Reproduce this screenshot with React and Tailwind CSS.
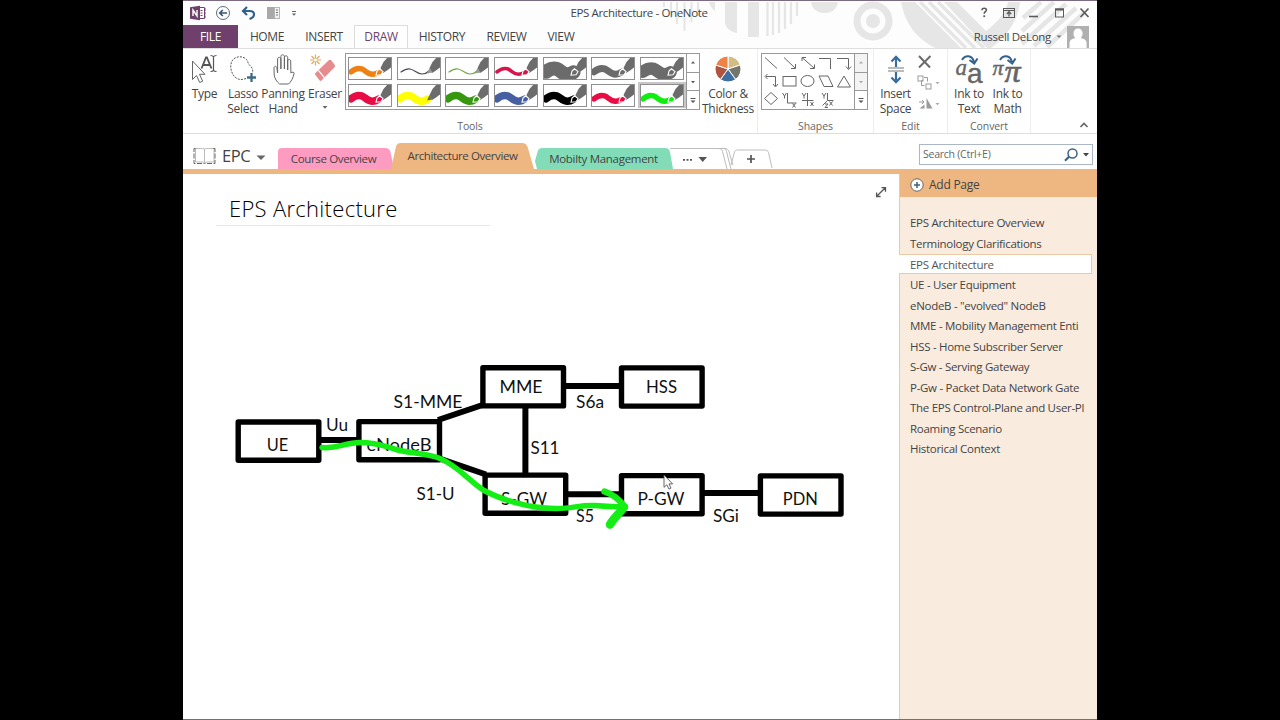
import React from 'react';

const QuickAccess = () => (
  <div className="flex items-center">
    <svg className="ml-[7px] h-4 w-4" viewBox="0 0 16 16">
      <path d="M9 2.500h5.500v11H9" fill="#fff" stroke="#70406c" strokeWidth="1" />
      <path d="M10.500 5.500h2M10.500 8h2M10.500 10.500h2M15 3v3M15 7v2.500M15 10.500v2.500" stroke="#70406c" strokeWidth="1" />
      <path d="M0 2.200L10 .8v14.400L0 13.800z" fill="#70406c" />
      <path d="M3 11V5l4 6V5" fill="none" stroke="#fff" strokeWidth="1.400" />
    </svg>
    <svg className="ml-[9px] h-4 w-4" viewBox="0 0 16 16" fill="none">
      <circle cx="8" cy="8" r="6.500" stroke="#5d6f7d" strokeWidth="1" />
      <path d="M12 8H5M7.800 5L4.800 8l3 3" stroke="#38566f" strokeWidth="1.700" />
    </svg>
    <svg className="ml-[10px] h-4 w-4" viewBox="0 0 16 16" fill="none">
      <path d="M2 6h6.500c3 0 4.500 1.300 4.500 3.300 0 2.200-1.700 3.800-4.500 4.700" stroke="#33618d" strokeWidth="2.200" />
      <path d="M6 2L2 6l4 4" stroke="#33618d" strokeWidth="2.200" />
    </svg>
    <svg className="ml-[9px] h-4 w-4" viewBox="0 0 16 16">
      <rect x="1" y="2" width="7.500" height="12" fill="#a9a9a9" />
      <rect x="8.500" y="2.400" width="5" height="11.200" fill="#f2f2f2" stroke="#a9a9a9" strokeWidth=".8" />
      <path d="M10 5h2M10 7.500h2M10 10h2" stroke="#777" />
    </svg>
    <svg className="ml-[8px] h-3 w-2" viewBox="0 0 8 12">
      <path d="M2 4.500h4" stroke="#666" />
      <path d="M1.800 6.500h4.400L4 8.800z" fill="#666" />
    </svg>
  </div>
);

const HeaderPattern = () => (
  <svg className="absolute inset-0 h-[47px] w-[914px]" viewBox="183 1 914 47" fill="none" stroke="#e6e6e6">
    <g fill="#e6e6e6" stroke="none">
      <path d="M725 2h12v31c-6-1-10-4-12-9z" />
      <path d="M748 2h11v35h-11z" />
      <path d="M811 2h27c-1 7-6 11-13.500 11S812 9 811 2z" />
      <circle cx="873" cy="21" r="7" />
      <path d="M709 2h6v9c-3-2-5-5-6-9z" />
      <path d="M901 2h14l46 46h-26c-18-9-30-24-34-46z" />
      <path d="M944 2h13l29 29c10-8 20-18 22-29h12c-2 20-15 36-29 46h-4z" />
    </g>
    <path d="M767.500 2v34M773 2v33M779 2v31M785 2v27M791 2v22M797 2v14" strokeWidth="2.300" />
    <path d="M664 2v5M671 2v16M677 2v22M684.500 2v29M691.500 2v20M698 2v14" strokeWidth="2" />
    <circle cx="873" cy="21" r="16" strokeWidth="7" />
    <path d="M920 2l46 46M929 2l46 46M938 2l46 46" strokeWidth="3.500" />
    <path d="M1041 2l-18 16M1054 2l-32 29M1066 4l-44 40M1076 8l-42 38M1085 12l-38 35" strokeWidth="4.500" />
  </svg>
);

const WindowControls = () => (
  <svg className="relative h-[14px] w-[114px]" viewBox="0 0 114 14" fill="none" stroke="#5b5b5b">
    <path d="M3 4.200c0-1.300 1-2 2.200-2s2.200.7 2.200 1.900c0 1.600-2.200 1.700-2.200 3.700" strokeWidth="1.600" />
    <path d="M5.200 9.300v1.800" strokeWidth="1.800" />
    <rect x="24.500" y="2.500" width="11" height="9" />
    <path d="M25 4.500h10" />
    <path d="M30 10.500V6M27.800 8L30 5.700 32.200 8" strokeWidth="1.300" />
    <path d="M50 10.500h9" strokeWidth="1.600" />
    <rect x="76.500" y="3" width="8" height="8" />
    <path d="M76 3.500h9" strokeWidth="2" />
    <path d="M101.500 2.500l8 8.500M109.500 2.500l-8 8.500" strokeWidth="1.700" />
  </svg>
);

const menu = [
  ['HOME', 'w-[58px]'],
  ['INSERT', 'w-[56px] mr-[2px]'],
  ['DRAW', 'w-[54px]'],
  ['HISTORY', 'w-[68px]'],
  ['REVIEW', 'w-[61px]'],
  ['VIEW', 'w-[48px]'],
];

const MenuBar = () => (
  <div className="relative flex h-[23px] items-end text-[12px] tracking-[-0.35px] text-[#444]">
    <div className="flex h-[23px] w-[55px] items-center justify-center bg-[#70406c] pt-px text-white">FILE</div>
    {menu.map(([label, width]) => (
      <div
        key={label}
        className={
          width +
          ' flex h-[23px] items-center justify-center ' +
          (label === 'DRAW' ? 'border-x border-t border-[#dcdcdc] bg-white text-[#70406c]' : 'pt-px')
        }
      >
        {label}
      </div>
    ))}
    <div className="ml-auto flex h-[23px] items-center text-[11.500px]">
      <span className="tracking-[-0.3px]">Russell DeLong</span>
      <svg className="ml-1 h-2 w-2" viewBox="0 0 8 8"><path d="M1.500 2.500h5L4 5z" fill="#777" /></svg>
      <svg className="mr-[8px] ml-[4px] h-[22px] w-[22px]" viewBox="0 0 22 22">
        <rect width="22" height="22" fill="#b0b0b0" />
        <path d="M11 2.500c3 0 4.600 2 4.600 5 0 2-1 3.600-2 4.600 4 .9 6 2.400 6 5V22H2.500v-4.900c0-2.600 2-4.100 6-5-1.200-1-2-2.600-2-4.600 0-3 1.500-5 4.500-5z" fill="#fff" />
      </svg>
    </div>
  </div>
);

const Tool = ({ icon, lines, width, caret }) => (
  <div className={width + ' flex flex-col items-center pt-[3px] text-[12px] leading-[15px] tracking-[-0.3px] text-[#444]'}>
    <div className="flex h-[34px] items-center justify-center">{icon}</div>
    {lines.map((l) => (
      <span key={l} className="whitespace-nowrap">{l}</span>
    ))}
    {caret && (
      <svg className="mt-[3px] h-2 w-2" viewBox="0 0 8 8"><path d="M1.500 2h5L4 4.800z" fill="#666" /></svg>
    )}
  </div>
);

const TypeIcon = () => (
  <svg className="h-8 w-8" viewBox="0 0 32 32" fill="none">
    <path d="M3.500 8v18.500l4-4 3.200 7 3-1.300-3.200-6.900h5.500z" fill="#fff" stroke="#666" />
    <path d="M12.500 15.500l4.500-11h.9l4.600 11M14.200 12h6.600" stroke="#555" strokeWidth="1.800" />
    <path d="M21.500 2.500c1.500 0 2.500.3 3 1.200.5-.9 1.500-1.200 3-1.200M24.500 3.500v14M21.500 18.500c1.500 0 2.500-.3 3-1.200.5.9 1.500 1.200 3 1.200" stroke="#555" strokeWidth="1.200" />
  </svg>
);

const LassoIcon = () => (
  <svg className="h-8 w-8" viewBox="0 0 32 32" fill="none">
    <path d="M19 25.500c-5 2-9 1-12-2.500-3-4-4.500-10-2-15 2.500-4.500 9-5.500 13.500-2.500 2.500 2 2 4.500 4 6.500 2 2 4 4 3 8" stroke="#555" strokeDasharray="2 1.200" />
    <path d="M24.500 20v9M20 24.500h9" stroke="#3d6c86" strokeWidth="2.300" />
  </svg>
);

const HandIcon = () => (
  <svg className="h-8 w-8" viewBox="0 0 32 32" fill="none" stroke="#666" strokeWidth="1">
    <path
      d="M12.500 31c-2.500-2-4.800-5.500-5.300-9L7 15c0-2 2.500-2.200 2.800-.3l.8 5.300V6c0-2.200 3.300-2.200 3.300 0v10V3.500c0-2.300 3.500-2.300 3.500 0V16 4.500c0-2.200 3.300-2.200 3.300 0V17 8c0-2 3-2 3 0l.2 12c1-1.200 3.500-1.200 3.200.6-.8 4-3.100 8.400-5.600 10.400z"
      fill="#fff"
    />
  </svg>
);

const EraserIcon = () => (
  <svg className="h-8 w-8" viewBox="1 0 32 32" fill="none">
    <path d="M7.500 1.500v4M7.500 8.500v4M2 7h4M9 7h4M3.500 3l3 3M8.500 8l3 3M11.500 3l-3 3M6.500 8l-3 3" stroke="#e0a95e" strokeWidth="1.200" />
    <path d="M7.500 20L20.500 7.500c1-.9 2-.8 2.800.1l3.300 4.200c.7.900.6 1.900-.3 2.700L13.500 27.500c-.7.600-1.500.5-2.100-.2l-4.100-5.500c-.5-.6-.5-1.200.2-1.800z" fill="#e58c8f" />
    <path d="M10.500 17.300l6 7.500" stroke="#fff" strokeWidth="1.200" />
  </svg>
);

const pens = [
  ['#ef8014', 5.5, 0, true],
  ['#4a4458', 1.2, 1, false],
  ['#6bab40', 1.2, 1, false],
  ['#d51648', 3.6, 0, true],
  ['#6b6b6b', 14, 0, true],
  ['#6b6b6b', 7, 0, true],
  ['#6b6b6b', 12.5, 0, true],
  ['#e80b44', 7.5, 0, true],
  ['#ffff00', 7.5, 0, false],
  ['#37980f', 7.5, 0, true],
  ['#465fa3', 7.5, 0, true],
  ['#000000', 7.5, 0, true],
  ['#e80b44', 5.5, 0, true],
  ['#10ee10', 5.5, 0, true],
];

const Pen = ({ color, w, thin, nib, active }) => (
  <div className={'flex h-[26px] w-[48px] items-center justify-center ' + (active ? 'bg-[#c9c5c9]' : '')}>
    <svg className="h-[23px] w-[44px] border border-[#8f8f8f] bg-white" viewBox="1 1 42 21" fill="none">
      <path
        d={thin ? 'M4 15c3-2 6-3.500 9-3 5 1 7 5 12 5 3 0 5-1 7-3' : 'M3 14.800c3-2.500 7-4 10.500-3 4 1.500 6 5.500 11 5.500 2 0 4-.8 6-2'}
        stroke={color}
        strokeWidth={w}
        strokeLinecap="round"
      />
      <path d="M32.500 11l3-6L40 0h5v9l-6 4.500-4 2.500z" fill="#6c6c6c" />
      {nib ? (
        <path d="M29 14l2.500-2.200 3.500 2.900-2 3.100-5 .4z" fill={color} stroke="#fff" strokeWidth="1.100" />
      ) : (
        <path d="M32.500 11l-2.500 5.500 5.500-1z" fill={w > 3 ? '#6c6c6c' : '#999'} />
      )}
    </svg>
  </div>
);

const ScrollColumn = ({ muted }) => (
  <div className="flex w-[13px] flex-col divide-y divide-[#999] border-l border-[#999] bg-white">
    {['M4 5.500h4L6 3.300z', 'M4 4h4L6 6.200z', 'M3.500 5.500h5L6 8z'].map((d, i) => (
      <div key={d} className={'flex flex-1 items-center justify-center ' + (muted && i < 2 ? 'bg-[#f3f3f3]' : '')}>
        <svg className="h-[10px] w-3" viewBox="0 0 12 10">
          <path d={d} fill={muted && i < 2 ? '#aaa' : '#555'} />
          {i === 2 && <path d="M3.500 3.500h5" stroke="#555" />}
        </svg>
      </div>
    ))}
  </div>
);

const WheelIcon = () => (
  <svg className="h-7 w-7" viewBox="-14 -14 28 28" stroke="#fff" strokeWidth="1">
    <path d="M0 0V-13A13 13 0 0 1 12.360 -4.020Z" fill="#d3bd83" />
    <path d="M0 0L12.360 -4.020A13 13 0 0 1 7.640 10.520Z" fill="#74756b" />
    <path d="M0 0L7.640 10.520A13 13 0 0 1 -7.640 10.520Z" fill="#3f6fa3" />
    <path d="M0 0L-7.640 10.520A13 13 0 0 1 -12.360 -4.020Z" fill="#b0543f" />
    <path d="M0 0L-12.360 -4.020A13 13 0 0 1 0 -13Z" fill="#ef8248" />
  </svg>
);

const ShapesGallery = () => (
  <div className="mt-[4px] flex h-[57px] w-[107px] border border-[#999] bg-white">
    <svg className="h-[55px] w-[92px]" viewBox="762 54 92 55" fill="none" stroke="#666" strokeWidth="1">
      <path d="M765 57.500l12 11" />
      <path d="M784 57.500l11 10.500M795.500 64v4.500h-4.500" />
      <path d="M802 57.500l12 10.500M802 61v-3.500h4M814.500 64.500v4h-4.500" />
      <path d="M819 58.500h11.500V69" />
      <path d="M837 58.500h11.500v10M846 66.500l2.500 3 2.500-3" />
      <path d="M766 76.500h9.500V86M767.500 74l-2.500 2.500 2.500 2.500M773 84l2.500 3 2.500-3" />
      <rect x="783" y="76.500" width="13" height="9.500" />
      <ellipse cx="807.500" cy="81" rx="6.500" ry="5.500" />
      <path d="M819 76h9l5 10.500h-9z" />
      <path d="M844 76l6.500 11h-13z" />
      <path d="M771 92.500l6.500 6-6.500 6-6.500-6z" />
      <path d="M782.500 93l2 3 2-3M784.500 96v2.500M787.500 93v10h9M792.500 103.500l3 4M795.500 103.500l-3 4" />
      <path d="M802 93l2 3 2-3M804 96v2.500M807.500 93v13M802 100.500h11.500M810.500 102l3 4M813.500 102l-3 4" />
      <path d="M822 93l2 3 2-3M824 96v2.500M827.500 93v7.500h6M827.500 100.500l-5 5M829.500 101.500l3 4M832.500 101.500l-3 4M825 104h3l-3 3.500h3" />
    </svg>
    <ScrollColumn muted />
  </div>
);

const InsertSpaceIcon = () => (
  <svg className="h-8 w-8" viewBox="0 0 32 32" fill="none">
    <path d="M8 15h16M8 18h16" stroke="#777" />
    <path d="M16 14V4.500M11.500 8.500L16 3.800l4.500 4.700M16 19v9.500M11.500 24.500L16 29.200l4.500-4.700" stroke="#3a6c9c" strokeWidth="2.200" />
  </svg>
);

const EditIcons = () => (
  <svg className="mt-[4px] h-[60px] w-6" viewBox="917 53 24 60" fill="none">
    <path d="M919 56l11 11.500M930.500 56L919 67.500" stroke="#6b6b6b" strokeWidth="2" />
    <g stroke="#9b9b9b">
      <rect x="918" y="76" width="5" height="5" />
      <rect x="926" y="84" width="5" height="5" />
      <path d="M924 77.500h3.500v4M923 80.500h-1.500v5h3" />
      <path d="M919 102h5M922 100l2 2-2 2" />
    </g>
    <path d="M926.500 98v10.500h6zM924.500 108.500h-5l5-4z" fill="#9b9b9b" />
    <path d="M935.500 82h4l-2 2.200zM935.500 103h4l-2 2.200z" fill="#aaa" />
  </svg>
);

const ConvertIcon = ({ children }) => (
  <svg className="h-8 w-[33px] overflow-visible" viewBox="0 0 33 32">
    <g fill="#666">{children}</g>
    <path d="M9 7C12 2 19 1.500 21 9M16.500 7l4.700 3.500L24.500 5.500" fill="none" stroke="#33618d" strokeWidth="2" />
  </svg>
);

const InkToTextIcon = () => (
  <ConvertIcon>
    <text x="2.500" y="22" fontFamily="Liberation Serif, serif" fontStyle="italic" fontSize="23" stroke="#666" strokeWidth=".4">a</text>
    <text x="14" y="30" fontFamily="Liberation Sans, sans-serif" fontSize="28" stroke="#666" strokeWidth=".4">a</text>
  </ConvertIcon>
);

const InkToMathIcon = () => (
  <ConvertIcon>
    <text x="1.500" y="21.500" fontFamily="Liberation Serif, serif" fontStyle="italic" fontSize="22" stroke="#666" strokeWidth=".5">π</text>
    <text x="13.500" y="29" fontFamily="Liberation Serif, serif" fontStyle="italic" fontSize="32" stroke="#666" strokeWidth=".7">π</text>
  </ConvertIcon>
);

const Group = ({ label, width, children }) => (
  <div className={width + ' flex flex-col justify-between border-r border-[#ededed]'}>
    <div className="flex">{children}</div>
    <div className="text-center text-[10.500px] leading-[14px] tracking-[-0.1px] text-[#666]">{label}</div>
  </div>
);

const Ribbon = () => (
  <div className="relative flex h-[86px] border-y border-[#dedede] bg-white">
    <Group label="Tools" width="w-[575px]">
      <Tool width="w-[43px]" icon={<TypeIcon />} lines={['Type']} />
      <Tool width="w-[34px]" icon={<LassoIcon />} lines={['Lasso', 'Select']} />
      <Tool width="w-[46px]" icon={<HandIcon />} lines={['Panning', 'Hand']} />
      <Tool width="w-[38px]" icon={<EraserIcon />} lines={['Eraser']} caret />
      <div className="mt-[4px] ml-[1px] flex h-[57px] w-[355px] border border-[#999]">
        <div className="grid w-[341px] grid-cols-7 content-center justify-items-center gap-y-[1px]">
          {pens.map(([color, w, thin, nib], i) => (
            <Pen key={i} color={color} w={w} thin={thin} nib={nib} active={i === 13} />
          ))}
        </div>
        <ScrollColumn />
      </div>
      <Tool width="w-[56px]" icon={<WheelIcon />} lines={['Color &', 'Thickness']} />
    </Group>
    <Group label="Shapes" width="w-[116px]">
      <div className="pl-[3px]"><ShapesGallery /></div>
    </Group>
    <Group label="Edit" width="w-[74px]">
      <Tool width="w-[43px]" icon={<InsertSpaceIcon />} lines={['Insert', 'Space']} />
      <EditIcons />
    </Group>
    <Group label="Convert" width="w-[83px]">
      <Tool width="w-[42px]" icon={<InkToTextIcon />} lines={['Ink to', 'Text']} />
      <Tool width="w-[35px]" icon={<InkToMathIcon />} lines={['Ink to', 'Math']} />
    </Group>
    <div className="flex flex-1 items-end justify-end">
      <svg className="mr-[8px] mb-[4px] h-2 w-[10px]" viewBox="0 0 10 8" fill="none">
        <path d="M1.500 6L5 2.500 8.500 6" stroke="#666" strokeWidth="1.700" />
      </svg>
    </div>
  </div>
);

const SectionTabs = () => (
  <div className="flex h-[35px] items-end bg-white text-[11.500px] tracking-[-0.35px] text-[#444]">
    <div className="flex h-[35px] w-[95px] items-center pt-[9px]">
      <svg className="ml-[10px] h-5 w-[24px]" viewBox="0 0 24 20" fill="none" stroke="#666">
        <path d="M11.500 3c-1-.4-2.500-.5-4-.5H2.500v13.500h5.500c1.500 0 2.500.2 3.500.5 1-.3 2-.5 3.500-.5h6V2.500h-5.500c-1.500 0-3 .1-4 .5z" stroke="#aaa" strokeWidth=".8" />
        <path d="M11.500 3v13.500" stroke="#bbb" />
        <path d="M2.500 2.500H1V17.500h10.500M20.500 2.500H22V17.500H11.500" strokeDasharray="5 1.500" />
      </svg>
      <span className="ml-[5px] text-[16.500px] tracking-[-0.4px]">EPC</span>
      <svg className="ml-[6px] h-3 w-[10px]" viewBox="0 0 10 12"><path d="M.5 5.500h9L5 10z" fill="#666" /></svg>
    </div>
    <div className="relative flex h-[21px] w-[116px] items-center justify-center pr-[5px]">
      <svg className="absolute inset-0 h-[21px] w-[116px]" viewBox="0 0 116 21"><path d="M0 21V3.500C0 1 1.500 0 4 0h103c3 0 5 1.500 5.500 4L116 21z" fill="#fd9cc0" /></svg>
      <span className="relative whitespace-nowrap">Course Overview</span>
    </div>
    <div className="relative -ml-1 flex h-[26px] w-[144px] items-center justify-center pl-px">
      <svg className="absolute inset-0 h-[26px] w-[144px]" viewBox="0 0 145 27" preserveAspectRatio="none"><path d="M1 27L6 4C6.500 1.500 8 0 11 0h122c3 0 4.500 1.500 5.500 4L145 27z" fill="#eeb781" /></svg>
      <span className="relative tracking-[-0.42px] whitespace-nowrap">Architecture Overview</span>
    </div>
    <div className="relative flex h-[21px] w-[139px] items-center justify-center">
      <svg className="absolute inset-0 h-[21px] w-[139px]" viewBox="0 0 139 21"><path d="M3 21L1 13l2.500-9C4 1.500 5.500 0 8.500 0H131c3 0 4.500 1.500 5 4l3 17z" fill="#82dcb8" /></svg>
      <span className="relative whitespace-nowrap tracking-[-0.3px]">Mobilty Management</span>
    </div>
    <div className="relative flex h-[21px] w-[99px] items-center">
      <svg className="absolute inset-0 h-[21px] w-[99px] overflow-visible" viewBox="2 0 99 21" fill="none" stroke="#bdbdbd">
        <path d="M-1 .5h48c3 0 4 1 4.500 3L56 21M47 .5h6c1.500.5 2 1.500 2.500 3L60 21M52 .5h3c2 .5 3 3 3.500 5L62 17M60 17l3.500-13c.5-1.500 1.500-2 3-2h27c2 0 3.500.5 4 2.500L101 20" />
      </svg>
      <svg className="relative ml-[9.500px] h-[10px] w-[26px]" viewBox="0 0 26 10" fill="#555">
        <path d="M0 5h2v1.800H0zM3.500 5h2v1.800h-2zM7 5h2v1.800H7zM15.500 3h8.500L19.700 8z" />
      </svg>
      <svg className="relative ml-[38.500px] h-2 w-2" viewBox="0 0 8 8"><path d="M4 0v8M0 4h8" stroke="#555" strokeWidth="1.700" /></svg>
    </div>
    <div className="mr-[4px] mb-[4px] ml-auto flex h-[21px] w-[174px] items-center border border-[#abb7c4] bg-white pl-[3px]">
      <span className="text-[10.500px] tracking-[-0.25px] text-[#666]">Search (Ctrl+E)</span>
      <svg className="ml-auto h-4 w-[15px]" viewBox="0 0 15 16" fill="none" stroke="#3d6280">
        <circle cx="9.500" cy="6.500" r="4.500" strokeWidth="1.500" />
        <path d="M6 9.800L2 13.800" strokeWidth="2.200" />
      </svg>
      <svg className="mr-[2px] ml-[4px] h-2 w-2" viewBox="0 0 8 8"><path d="M1 2h6L4 5.500z" fill="#444" /></svg>
    </div>
  </div>
);

const boxes = [
  [235.5, 419.3, 'UE', 277.5, 451.3, 21.5],
  [356.2, 418.9, 'eNodeB', 399, 450.6, 65],
  [480.2, 365, 'MME', 521, 393, 43],
  [482.4, 472.4, 'S-GW', 524, 504.7, 46],
  [618.8, 365.2, 'HSS', 661.5, 393, 31],
  [618.8, 472.9, 'P-GW', 661, 505, 47],
  [757.7, 473.2, 'PDN', 800.3, 505, 35],
];

const links = [
  ['Uu', 337, 431, 22],
  ['S1-MME', 428, 408, 69],
  ['S6a', 590, 408, 28],
  ['S11', 545, 454, 29],
  ['S1-U', 435.5, 499.5, 38],
  ['S5', 585, 522.3, 18],
  ['SGi', 726, 522.3, 26],
];

const Diagram = () => (
  <svg className="h-[545px] w-[716px]" viewBox="183 174 716 545" fill="none">
    <path
      d="M318 440h41M438 420l46-15.500M438 458l48 16.500M525.400 406v69M563 386h58M566 494.300h55M702 493h58"
      stroke="#000"
      strokeWidth="6"
    />
    {boxes.map(([x, y, label, cx, base, len]) => (
      <g key={label}>
        <rect x={x + 2.7} y={y + 2.7} width="80.600" height="38.200" fill="#fff" stroke="#000" strokeWidth="5.400" strokeLinejoin="round" />
        <text x={cx} y={base} textAnchor="middle" textLength={len} lengthAdjust="spacingAndGlyphs" fill="#111">{label}</text>
      </g>
    ))}
    {links.map(([label, cx, base, len]) => (
      <text key={label} x={cx} y={base} textAnchor="middle" textLength={len} lengthAdjust="spacingAndGlyphs" fill="#111">{label}</text>
    ))}
    <path
      d="M322 447.500C338 449 345 442.500 360 442.500C376 442.500 384 446 396 449.500C410 453.500 428 453 440 458.500C458 466 468 480 484 490.500C500 499 528 508.500 555 508.500C572 509 580 504.500 595 505.500C606 506.500 615 507 625 506.500"
      stroke="#15ee15"
      strokeWidth="5.500"
      strokeLinecap="round"
    />
    <path d="M604.500 491.500C612 494 620 500 624.500 507" stroke="#15ee15" strokeWidth="6.500" strokeLinecap="round" />
    <path d="M624 507C620 513 613 519 610 524.500" stroke="#15ee15" strokeWidth="8.500" strokeLinecap="round" />
    <path d="M664 475v12.300l2.800-2.500 2.200 4.300 2-1-2-4.200h3.600z" fill="#fff" stroke="#555" strokeWidth=".9" />
  </svg>
);

const Canvas = () => (
  <div className="relative w-[716px] bg-white font-[Lato,sans-serif] text-[17.800px]">
    <Diagram />
    <div className="absolute top-[19px] left-[33px] w-[274px] border-b border-[#e6e6e6] pb-px pl-[13px] font-['Open_Sans',sans-serif] text-[22px] leading-[31px] font-light tracking-[0.3px] whitespace-nowrap text-black">
      EPS Architecture
    </div>
    <svg className="absolute top-[12px] right-[12px] h-3 w-3" viewBox="0 0 12 12" fill="none" stroke="#555" strokeWidth="1.300">
      <path d="M2 10l8-8M6.500 1.700h4v4M1.600 6.500v4h4" />
    </svg>
  </div>
);

const pages = [
  'EPS Architecture Overview',
  'Terminology Clarifications',
  'EPS Architecture',
  'UE - User Equipment',
  'eNodeB - "evolved" NodeB',
  'MME - Mobility Management Enti',
  'HSS - Home Subscriber Server',
  'S-Gw - Serving Gateway',
  'P-Gw - Packet Data Network Gate',
  'The EPS Control-Plane and User-Pl',
  'Roaming Scenario',
  'Historical Context',
];

const PageList = () => (
  <div className="flex w-[198px] flex-col border-l border-[#eec8a3] bg-[#faebdf] text-[#444]">
    <div className="flex h-[23px] items-center bg-[#eeb781] pb-[2px] pl-[10px] text-[12px] tracking-[-0.25px]">
      <svg className="mr-[5px] h-[14px] w-[14px]" viewBox="0 0 14 14">
        <circle cx="7" cy="7" r="6.200" fill="#fff" stroke="#666" />
        <path d="M7 4v6M4 7h6" stroke="#3d6280" strokeWidth="1.500" />
      </svg>
      Add Page
    </div>
    <div className="mt-[15.800px] flex flex-col text-[11.500px] tracking-[-0.290px]">
      {pages.map((p) => (
        <div
          key={p}
          className={
            'mr-[5px] flex h-[20.550px] items-center pl-[10px] whitespace-nowrap ' +
            (p === 'EPS Architecture' ? '-ml-px border border-l-0 border-[#edc9a6] bg-white pl-[11px] text-[#555]' : '')
          }
        >
          {p}
        </div>
      ))}
    </div>
  </div>
);

export default function App() {
  return (
    <div className="flex h-[720px] w-[1280px] justify-center overflow-hidden bg-black font-['Open_Sans','Noto_Sans',sans-serif]">
      <div className="flex h-[720px] w-[914px] flex-col border-y border-[#7c6a80] bg-white">
        <div className="relative bg-[#fdfdfd]">
          <HeaderPattern />
          <div className="relative flex h-6 items-center">
            <QuickAccess />
            <div className="ml-[271px] w-[140px] text-center text-[11.500px] tracking-[-0.37px] whitespace-nowrap text-[#444]">EPS Architecture - OneNote</div>
            <div className="ml-auto flex pr-[4px]"><WindowControls /></div>
          </div>
          <MenuBar />
        </div>
        <Ribbon />
        <SectionTabs />
        <div className="h-[5px] shrink-0 bg-[#eeb781]" />
        <div className="flex min-h-0 flex-1">
          <Canvas />
          <PageList />
        </div>
      </div>
    </div>
  );
}
